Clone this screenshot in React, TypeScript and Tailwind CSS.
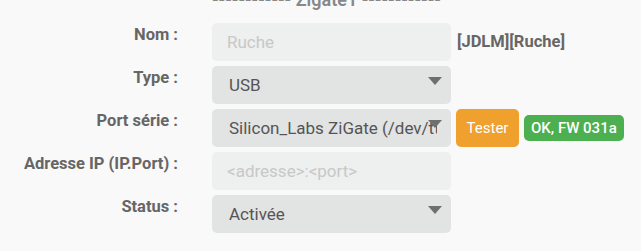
import React from 'react';

const Arrow = () => (
  <svg
    className="absolute right-[9px] top-[11px]"
    width="14"
    height="8"
    viewBox="0 0 14 8"
  >
    <path d="M0 0 H14 L7 8 Z" fill="#6f6f6f" />
  </svg>
);

const Label: React.FC<{ children: React.ReactNode }> = ({ children }) => (
  <div className="w-[178px] shrink-0 pt-[2px] text-right text-[16.5px] font-bold leading-[20px] text-[#666]">
    {children}
  </div>
);

const Field: React.FC<{ text: string; placeholder?: boolean; select?: boolean }> = ({
  text,
  placeholder,
  select,
}) => (
  <div
    className={`relative h-[38px] w-[239px] shrink-0 overflow-hidden rounded-[5px] whitespace-nowrap text-[17px] leading-[38px] ${
      select ? 'bg-[#e2e3e3] pl-[17px] pr-[14px] text-[#555]' : 'bg-[#eeefef] pl-[15px] text-[#c8c8c8]'
    }`}
  >
    <div className="overflow-hidden">{text}</div>
    {select && <Arrow />}
  </div>
);

export default function App() {
  return (
    <div
      className="h-[251px] w-[641px] overflow-hidden bg-[#f9f9f9]"
      style={{ fontFamily: 'Roboto, "Liberation Sans", sans-serif' }}
    >
      <div className="mt-[-11px] pl-[212px] text-[18px] font-semibold leading-[22px] text-[#888]">
        ------------ Zigate1 ------------
      </div>
      <div className="mt-[12px] flex flex-col gap-[5px]">
        <div className="flex items-start gap-[34px]">
          <Label>Nom :</Label>
          <div className="flex items-center gap-[6px]">
            <Field text="Ruche" />
            <span className="text-[16.5px] font-bold text-[#666]">[JDLM][Ruche]</span>
          </div>
        </div>
        <div className="flex items-start gap-[34px]">
          <Label>Type :</Label>
          <Field text="USB" select />
        </div>
        <div className="flex items-start gap-[34px]">
          <Label>Port série :</Label>
          <div className="flex items-center">
            <Field text="Silicon_Labs ZiGate (/dev/ttyUSB0)" select />
            <button className="ml-[5px] h-[38px] w-[63px] rounded-[5px] bg-[#f0a02c] text-[15px] text-white">
              Tester
            </button>
            <span className="ml-[5px] flex h-[26px] items-center rounded-[5px] bg-[#4caf50] px-[7px] text-[15px] font-medium text-white">
              OK, FW 031a
            </span>
          </div>
        </div>
        <div className="flex items-start gap-[34px]">
          <Label>Adresse IP (IP.Port) :</Label>
          <Field text="<adresse>:<port>" placeholder />
        </div>
        <div className="flex items-start gap-[34px]">
          <Label>Status :</Label>
          <Field text="Activée" select />
        </div>
      </div>
    </div>
  );
}
